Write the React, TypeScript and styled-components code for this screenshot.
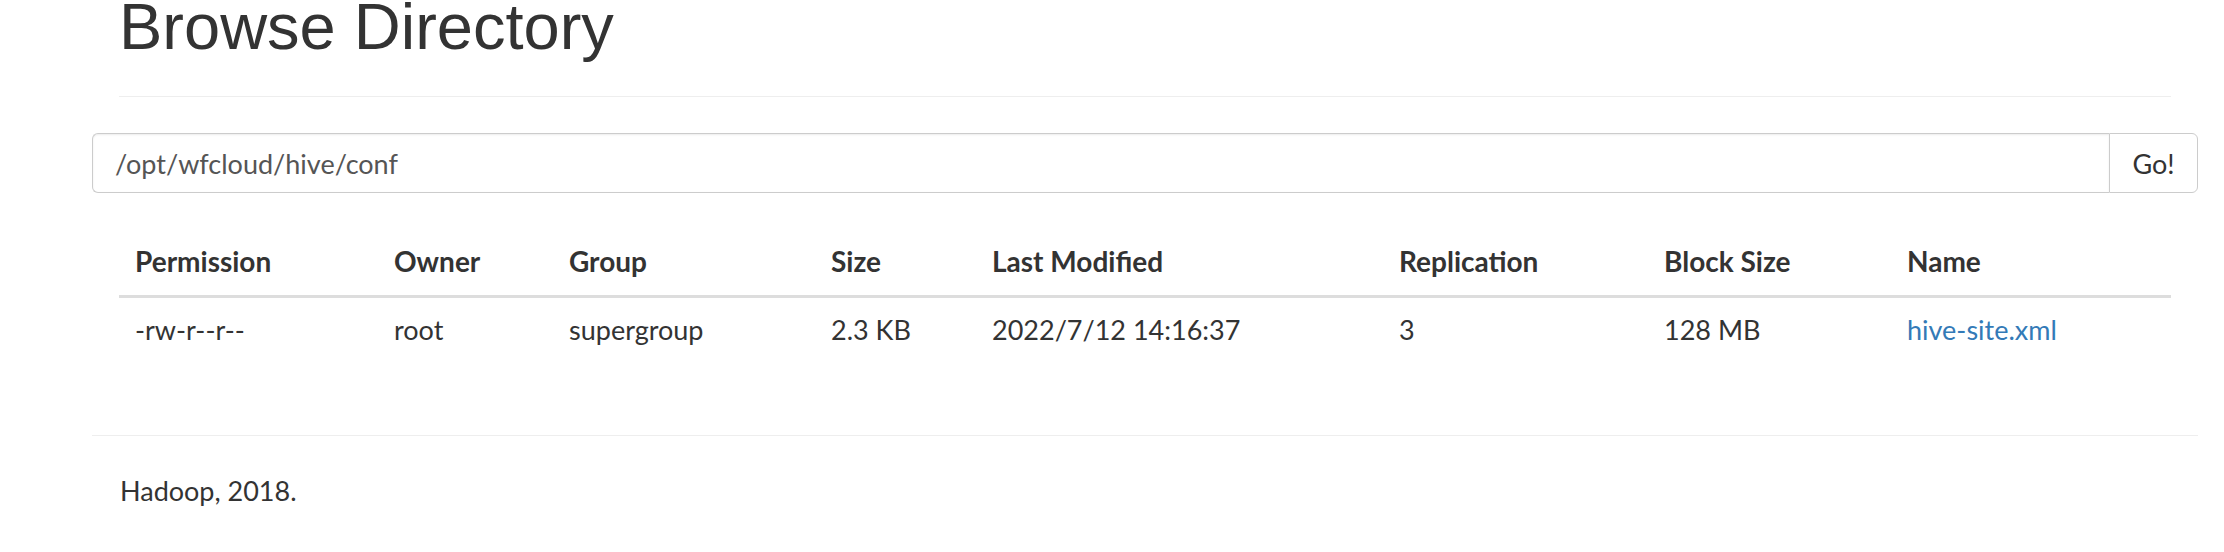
import styled, { createGlobalStyle } from 'styled-components';

const GlobalStyle = createGlobalStyle`
  body {
    margin: 0;
    background: #fff;
    color: #333;
    font-family: Lato, "Open Sans", sans-serif;
  }
`;

const Page = styled.div`
  padding: 0 26px 0 92px;
`;

const Section = styled.div`
  padding: 0 27px;
`;

const PageHeader = styled.div`
  padding-bottom: 18px;
  border-bottom: 1px solid #eee;
`;

const Title = styled.h1`
  margin: 0 0 24px;
  font-family: "Liberation Sans", Arial, sans-serif;
  font-size: 65px;
  line-height: 54px;
  font-weight: 400;
  color: #333;
`;

const PathForm = styled.form`
  display: flex;
  margin-top: 36px;
  height: 60px;
`;

const PathInput = styled.input`
  flex: 1;
  min-width: 0;
  box-sizing: border-box;
  height: 60px;
  padding: 0 22px;
  border: 1px solid #ccc;
  border-right: 0;
  border-radius: 6px 0 0 6px;
  box-shadow: inset 0 1px 2px rgba(0, 0, 0, 0.075);
  font-family: Lato, sans-serif;
  font-size: 27px;
  color: #555;
  outline: none;
`;

const GoButton = styled.button`
  box-sizing: border-box;
  width: 89px;
  height: 60px;
  padding: 0;
  border: 1px solid #ccc;
  border-radius: 0 6px 6px 0;
  background: #fff;
  font-family: Lato, sans-serif;
  font-size: 27px;
  color: #333;
`;

const Table = styled.table`
  width: 100%;
  margin-top: 34px;
  border-collapse: collapse;
  border-spacing: 0;
  table-layout: fixed;
`;

const HeadCell = styled.th`
  padding: 15px 16px 15px;
  border-bottom: 3px solid #ddd;
  text-align: left;
  font-size: 28px;
  line-height: 38px;
  font-weight: 700;
  white-space: nowrap;
`;

const Cell = styled.td`
  padding: 13px 16px 14px;
  font-size: 27px;
  line-height: 38px;
  white-space: nowrap;
`;

const FileLink = styled.a`
  color: #337ab7;
  text-decoration: none;
`;

const FooterRule = styled.hr`
  margin: 72px 0 0;
  border: 0;
  border-top: 1px solid #eee;
`;

const FooterText = styled.p`
  margin: 36px 0 0;
  padding-left: 1px;
  font-size: 27px;
  line-height: 38px;
`;

const columns = [
  { label: 'Permission', width: 259 },
  { label: 'Owner', width: 175 },
  { label: 'Group', width: 262 },
  { label: 'Size', width: 161 },
  { label: 'Last Modified', width: 407 },
  { label: 'Replication', width: 265 },
  { label: 'Block Size', width: 243 },
  { label: 'Name', width: 280 },
];

const files = [
  {
    permission: '-rw-r--r--',
    owner: 'root',
    group: 'supergroup',
    size: '2.3 KB',
    modified: '2022/7/12 14:16:37',
    replication: '3',
    blockSize: '128 MB',
    name: 'hive-site.xml',
  },
];

function App() {
  return (
    <Page>
      <GlobalStyle />
      <Section>
        <PageHeader>
          <Title>Browse Directory</Title>
        </PageHeader>
      </Section>
      <PathForm onSubmit={(e) => e.preventDefault()}>
        <PathInput defaultValue="/opt/wfcloud/hive/conf" />
        <GoButton type="submit">Go!</GoButton>
      </PathForm>
      <Section>
        <Table>
          <colgroup>
            {columns.map((c) => (
              <col key={c.label} style={{ width: c.width }} />
            ))}
          </colgroup>
          <thead>
            <tr>
              {columns.map((c) => (
                <HeadCell key={c.label}>{c.label}</HeadCell>
              ))}
            </tr>
          </thead>
          <tbody>
            {files.map((f) => (
              <tr key={f.name}>
                <Cell>{f.permission}</Cell>
                <Cell>{f.owner}</Cell>
                <Cell>{f.group}</Cell>
                <Cell>{f.size}</Cell>
                <Cell>{f.modified}</Cell>
                <Cell>{f.replication}</Cell>
                <Cell>{f.blockSize}</Cell>
                <Cell>
                  <FileLink href="#">{f.name}</FileLink>
                </Cell>
              </tr>
            ))}
          </tbody>
        </Table>
      </Section>
      <FooterRule />
      <Section>
        <FooterText>Hadoop, 2018.</FooterText>
      </Section>
    </Page>
  );
}

export default App;
